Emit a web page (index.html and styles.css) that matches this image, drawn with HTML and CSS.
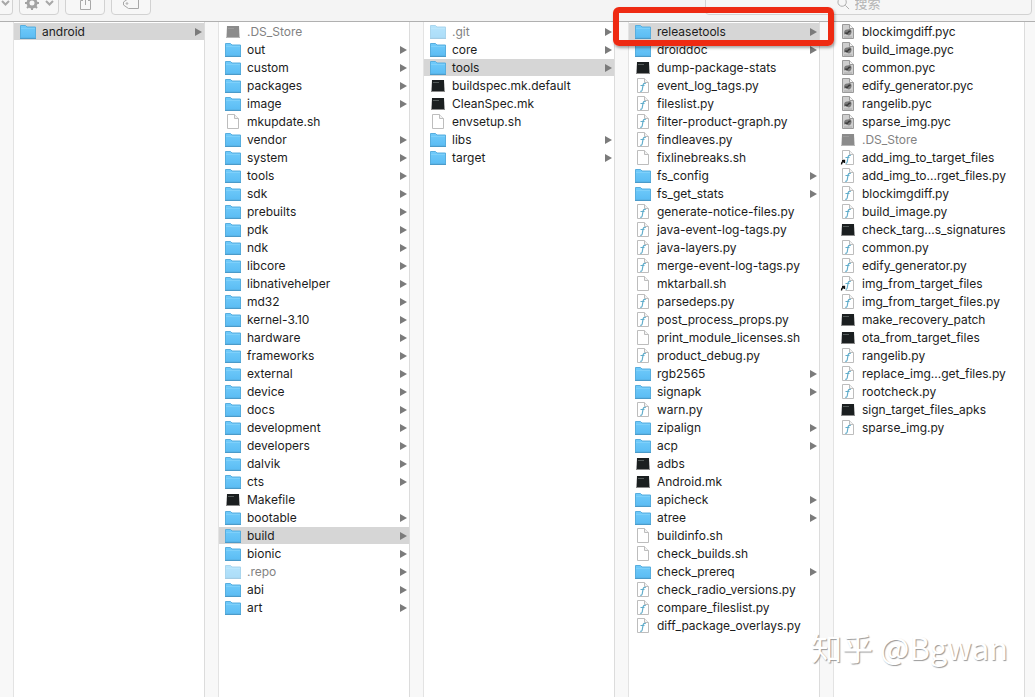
FILE: index.html
```html
<!DOCTYPE html>
<html lang="zh-CN">
<head>
<meta charset="utf-8">
<title>releasetools</title>
<link rel="stylesheet" href="styles.css">
</head>
<body>
<svg class="defs" aria-hidden="true">
  <defs>
    <linearGradient id="blue" x1="0" y1="0" x2="0" y2="1"><stop offset="0" stop-color="#70cbfb"/><stop offset="1" stop-color="#5bbcf3"/></linearGradient>
    <symbol id="dir" viewBox="0 0 16 16">
      <path d="M.5 1.500h5l1.500 1.500h8.500v11H.5z" fill="url(#blue)" stroke="#58aede"/>
      <path d="M1 4.500h14" stroke="#7ed0fa"/>
      <path d="M0 14.500h16" stroke="#4b9bca"/>
    </symbol>
    <symbol id="exe" viewBox="0 0 16 16">
      <path d="M2 2h12l.5 11h-13z" fill="#1b1f20"/>
      <path d="M1 13.500h14" stroke="#8a8a8a"/>
      <path d="M3.500 4.500h5" stroke="#8d9693" stroke-dasharray="1 1"/>
    </symbol>
    <symbol id="gray" viewBox="0 0 16 16">
      <path d="M2 2h12l.5 11h-13z" fill="#8b8b8b"/>
      <path d="M1 13.500h14" stroke="#b5b5b5"/>
      <path d="M3.500 4.500h5" stroke="#aaa" stroke-dasharray="1 1"/>
    </symbol>
    <symbol id="doc" viewBox="0 0 16 16">
      <path d="M2.500.5h7l4 4v10h-11z" fill="#fff" stroke="#bdbdbd"/>
      <path d="M9.500.5v4h4" fill="#f2f2f2" stroke="#bdbdbd"/>
    </symbol>
    <symbol id="py" viewBox="0 0 16 16">
      <use href="#doc"/>
      <path d="M10.800 5.500c-2.200-.6-2.600.5-2.900 2.500l-.7 4c-.2 1-.8 1.500-1.900 1.200M5.500 7.500h4" fill="none" stroke="#62adcb" stroke-width="1.200"/>
    </symbol>
    <symbol id="link" viewBox="0 0 16 16">
      <use href="#py"/>
      <path d="M1 9h4.500v6H1z" fill="#fff"/>
      <path d="M1.500 14.500c0-2 1-3 2.500-3M2 10.500h2.500V13" fill="none" stroke="#111" stroke-width="1.300"/>
    </symbol>
    <symbol id="pyc" viewBox="0 0 16 16">
      <path d="M2.500.5h7l4 4v10h-11z" fill="#cfcfcf" stroke="#9a9a9a"/>
      <path d="M9.500.5v4h4" fill="#f4f4f4" stroke="#9a9a9a"/>
      <path d="M4 9c0-3 2-4 4-3.500C10 4 12 6 11.500 8.500S9 12 7.500 11 4 11.500 4 9z" fill="#7b7b7b"/>
      <path d="M5.500 8.500c1 1.500 2 1 2.500 0s1.500-1.500 2.500-1" fill="none" stroke="#3c3c3c" stroke-width="1.500"/>
      <path d="M4 13h8" stroke="#aaa"/>
    </symbol>
  </defs>
</svg>

<header class="toolbar">
  <button class="tool tool-edge" aria-label="View options"><svg viewBox="0 0 10 6" class="chevron"><path d="M1 1l3.500 3.500L8 1"/></svg></button>
  <button class="tool" aria-label="Actions">
    <svg viewBox="0 0 16 16" class="glyph"><circle cx="8" cy="8" r="4" fill="none" stroke="#a3a3a3" stroke-width="3"/><path d="M8 1v3M8 12v3M1 8h3M12 8h3M3 3l2 2M11 11l2 2M3 13l2-2M11 5l2-2" stroke="#a3a3a3" stroke-width="2"/></svg>
    <svg viewBox="0 0 10 6" class="chevron"><path d="M1 1l3.500 3.500L8 1"/></svg>
  </button>
  <button class="tool" aria-label="Share"><svg viewBox="0 0 16 16" class="glyph line"><path d="M6 5.500H3.500v9h10v-9H11M8.500 10V1M6 3.500L8.500 1 11 3.500"/></svg></button>
  <button class="tool" aria-label="Tags"><svg viewBox="0 0 18 16" class="glyph tag line"><path d="M6.500 3.500h10v10h-10L1.500 10V7z"/><circle cx="5" cy="8.500" r=".8"/></svg></button>
  <label class="search">
    <svg viewBox="0 0 14 14" class="lens line"><circle cx="5.500" cy="5.500" r="4.500"/><path d="M9 9l4 4"/></svg>
    <input type="search" placeholder="搜索" aria-label="搜索">
  </label>
</header>

<main class="browser">
  <ul class="column">
    <li class="row folder selected"><svg><use href="#dir"/></svg>android</li>
  </ul>
  <ul class="column">
    <li class="row hidden-file"><svg><use href="#gray"/></svg>.DS_Store</li>
    <li class="row folder"><svg><use href="#dir"/></svg>out</li>
    <li class="row folder"><svg><use href="#dir"/></svg>custom</li>
    <li class="row folder"><svg><use href="#dir"/></svg>packages</li>
    <li class="row folder"><svg><use href="#dir"/></svg>image</li>
    <li class="row"><svg><use href="#doc"/></svg>mkupdate.sh</li>
    <li class="row folder"><svg><use href="#dir"/></svg>vendor</li>
    <li class="row folder"><svg><use href="#dir"/></svg>system</li>
    <li class="row folder"><svg><use href="#dir"/></svg>tools</li>
    <li class="row folder"><svg><use href="#dir"/></svg>sdk</li>
    <li class="row folder"><svg><use href="#dir"/></svg>prebuilts</li>
    <li class="row folder"><svg><use href="#dir"/></svg>pdk</li>
    <li class="row folder"><svg><use href="#dir"/></svg>ndk</li>
    <li class="row folder"><svg><use href="#dir"/></svg>libcore</li>
    <li class="row folder"><svg><use href="#dir"/></svg>libnativehelper</li>
    <li class="row folder"><svg><use href="#dir"/></svg>md32</li>
    <li class="row folder"><svg><use href="#dir"/></svg>kernel-3.10</li>
    <li class="row folder"><svg><use href="#dir"/></svg>hardware</li>
    <li class="row folder"><svg><use href="#dir"/></svg>frameworks</li>
    <li class="row folder"><svg><use href="#dir"/></svg>external</li>
    <li class="row folder"><svg><use href="#dir"/></svg>device</li>
    <li class="row folder"><svg><use href="#dir"/></svg>docs</li>
    <li class="row folder"><svg><use href="#dir"/></svg>development</li>
    <li class="row folder"><svg><use href="#dir"/></svg>developers</li>
    <li class="row folder"><svg><use href="#dir"/></svg>dalvik</li>
    <li class="row folder"><svg><use href="#dir"/></svg>cts</li>
    <li class="row"><svg><use href="#exe"/></svg>Makefile</li>
    <li class="row folder"><svg><use href="#dir"/></svg>bootable</li>
    <li class="row folder selected"><svg><use href="#dir"/></svg>build</li>
    <li class="row folder"><svg><use href="#dir"/></svg>bionic</li>
    <li class="row folder hidden-file"><svg><use href="#dir"/></svg>.repo</li>
    <li class="row folder"><svg><use href="#dir"/></svg>abi</li>
    <li class="row folder"><svg><use href="#dir"/></svg>art</li>
  </ul>
  <ul class="column">
    <li class="row folder hidden-file"><svg><use href="#dir"/></svg>.git</li>
    <li class="row folder"><svg><use href="#dir"/></svg>core</li>
    <li class="row folder selected"><svg><use href="#dir"/></svg>tools</li>
    <li class="row"><svg><use href="#exe"/></svg>buildspec.mk.default</li>
    <li class="row"><svg><use href="#exe"/></svg>CleanSpec.mk</li>
    <li class="row"><svg><use href="#doc"/></svg>envsetup.sh</li>
    <li class="row folder"><svg><use href="#dir"/></svg>libs</li>
    <li class="row folder"><svg><use href="#dir"/></svg>target</li>
  </ul>
  <ul class="column">
    <li class="row folder selected marked"><svg><use href="#dir"/></svg>releasetools</li>
    <li class="row folder"><svg><use href="#dir"/></svg>droiddoc</li>
    <li class="row"><svg><use href="#exe"/></svg>dump-package-stats</li>
    <li class="row"><svg><use href="#py"/></svg>event_log_tags.py</li>
    <li class="row"><svg><use href="#py"/></svg>fileslist.py</li>
    <li class="row"><svg><use href="#py"/></svg>filter-product-graph.py</li>
    <li class="row"><svg><use href="#py"/></svg>findleaves.py</li>
    <li class="row"><svg><use href="#doc"/></svg>fixlinebreaks.sh</li>
    <li class="row folder"><svg><use href="#dir"/></svg>fs_config</li>
    <li class="row folder"><svg><use href="#dir"/></svg>fs_get_stats</li>
    <li class="row"><svg><use href="#py"/></svg>generate-notice-files.py</li>
    <li class="row"><svg><use href="#py"/></svg>java-event-log-tags.py</li>
    <li class="row"><svg><use href="#py"/></svg>java-layers.py</li>
    <li class="row"><svg><use href="#py"/></svg>merge-event-log-tags.py</li>
    <li class="row"><svg><use href="#doc"/></svg>mktarball.sh</li>
    <li class="row"><svg><use href="#py"/></svg>parsedeps.py</li>
    <li class="row"><svg><use href="#py"/></svg>post_process_props.py</li>
    <li class="row"><svg><use href="#doc"/></svg>print_module_licenses.sh</li>
    <li class="row"><svg><use href="#py"/></svg>product_debug.py</li>
    <li class="row folder"><svg><use href="#dir"/></svg>rgb2565</li>
    <li class="row folder"><svg><use href="#dir"/></svg>signapk</li>
    <li class="row"><svg><use href="#py"/></svg>warn.py</li>
    <li class="row folder"><svg><use href="#dir"/></svg>zipalign</li>
    <li class="row folder"><svg><use href="#dir"/></svg>acp</li>
    <li class="row"><svg><use href="#exe"/></svg>adbs</li>
    <li class="row"><svg><use href="#exe"/></svg>Android.mk</li>
    <li class="row folder"><svg><use href="#dir"/></svg>apicheck</li>
    <li class="row folder"><svg><use href="#dir"/></svg>atree</li>
    <li class="row"><svg><use href="#doc"/></svg>buildinfo.sh</li>
    <li class="row"><svg><use href="#doc"/></svg>check_builds.sh</li>
    <li class="row folder"><svg><use href="#dir"/></svg>check_prereq</li>
    <li class="row"><svg><use href="#py"/></svg>check_radio_versions.py</li>
    <li class="row"><svg><use href="#py"/></svg>compare_fileslist.py</li>
    <li class="row"><svg><use href="#py"/></svg>diff_package_overlays.py</li>
  </ul>
  <ul class="column">
    <li class="row"><svg><use href="#pyc"/></svg>blockimgdiff.pyc</li>
    <li class="row"><svg><use href="#pyc"/></svg>build_image.pyc</li>
    <li class="row"><svg><use href="#pyc"/></svg>common.pyc</li>
    <li class="row"><svg><use href="#pyc"/></svg>edify_generator.pyc</li>
    <li class="row"><svg><use href="#pyc"/></svg>rangelib.pyc</li>
    <li class="row"><svg><use href="#pyc"/></svg>sparse_img.pyc</li>
    <li class="row hidden-file"><svg><use href="#gray"/></svg>.DS_Store</li>
    <li class="row"><svg><use href="#link"/></svg>add_img_to_target_files</li>
    <li class="row"><svg><use href="#py"/></svg>add_img_to...rget_files.py</li>
    <li class="row"><svg><use href="#py"/></svg>blockimgdiff.py</li>
    <li class="row"><svg><use href="#py"/></svg>build_image.py</li>
    <li class="row"><svg><use href="#exe"/></svg>check_targ...s_signatures</li>
    <li class="row"><svg><use href="#py"/></svg>common.py</li>
    <li class="row"><svg><use href="#py"/></svg>edify_generator.py</li>
    <li class="row"><svg><use href="#link"/></svg>img_from_target_files</li>
    <li class="row"><svg><use href="#py"/></svg>img_from_target_files.py</li>
    <li class="row"><svg><use href="#exe"/></svg>make_recovery_patch</li>
    <li class="row"><svg><use href="#exe"/></svg>ota_from_target_files</li>
    <li class="row"><svg><use href="#py"/></svg>rangelib.py</li>
    <li class="row"><svg><use href="#py"/></svg>replace_img...get_files.py</li>
    <li class="row"><svg><use href="#py"/></svg>rootcheck.py</li>
    <li class="row"><svg><use href="#exe"/></svg>sign_target_files_apks</li>
    <li class="row"><svg><use href="#py"/></svg>sparse_img.py</li>
  </ul>
</main>
<div class="watermark">知乎 @Bgwan</div>
</body>
</html>
```

FILE: styles.css
```css
* { box-sizing: border-box; }

body {
  position: relative;
  display: flex;
  flex-direction: column;
  min-height: 100vh;
  margin: 0;
  background: #f8f8f8;
  color: #1c1c1c;
  font: 12px/18px Inter, "Noto Sans CJK SC", sans-serif;
}

.defs { position: absolute; width: 0; height: 0; }

.toolbar {
  display: flex;
  align-items: flex-end;
  gap: 6px;
  height: 22px;
  padding: 0 3px 6px 0;
  overflow: hidden;
  background: #f4f4f4;
  border-bottom: 1px solid #b0b0b0;
}

.tool {
  display: flex;
  align-items: center;
  justify-content: center;
  gap: 5px;
  width: 40px;
  height: 24px;
  padding: 0;
  background: #f7f7f7;
  border: 1px solid #d2d2d2;
  border-radius: 4px;
}

.tool-edge { width: 13px; border-left: 0; border-radius: 0 4px 4px 0; }
.glyph { width: 16px; height: 16px; }
.tag { width: 18px; }
.line, .chevron { fill: none; stroke: #a8a8a8; stroke-width: 1; }
.chevron { flex: none; width: 10px; height: 6px; stroke-width: 2; }

.search {
  display: flex;
  align-items: center;
  justify-content: center;
  gap: 5px;
  width: 327px;
  height: 24px;
  margin-left: auto;
  padding-left: 14px;
  background: #f6f6f6;
  border: 1px solid #d2d2d2;
  border-radius: 4px;
}

.lens { width: 13px; height: 13px; }

.search input {
  width: 60px;
  padding: 0;
  background: none;
  border: 0;
  outline: 0;
  font: inherit;
  font-size: 13px;
}

.search input::placeholder { color: #b4b4b4; }

.browser {
  flex: 1;
  display: grid;
  grid-template-columns: repeat(5, minmax(0, 1fr));
  column-gap: 15px;
  padding: 0 11px 0 14px;
}

.column {
  margin: 0;
  padding: 1px 0 0;
  list-style: none;
  background: #fff;
  box-shadow: -1px 0 #e3e3e3, 1px 0 #dcdcdc;
}

.row {
  position: relative;
  display: flex;
  align-items: center;
  gap: 6px;
  height: 18px;
  padding: 0 2px 0 6px;
  white-space: nowrap;
}

.row svg { flex: none; width: 16px; height: 16px; }

.folder::after {
  content: "";
  margin-left: auto;
  border: solid transparent;
  border-width: 4px 0 4px 7px;
  border-left-color: #7b7b7b;
}

.selected { background: linear-gradient(#d6d6d6 17px, #fff 17px); }

.hidden-file { color: #828282; }
.folder.hidden-file svg { opacity: .5; }

/* Red annotation frame around the highlighted folder */
.marked::before {
  content: "";
  position: absolute;
  inset: -16px -15px -5px -16px;
  z-index: 1;
  border: 6px solid #ee2a12;
  border-radius: 6px;
  box-shadow: 1px 2px 3px rgba(0, 0, 0, .35);
}

.watermark {
  position: absolute;
  right: 27px;
  bottom: 28px;
  color: #fff;
  font-family: "Noto Sans CJK SC", sans-serif;
  font-size: 31px;
  line-height: 44px;
  text-shadow: 1px 1px 1px #999;
}
```
